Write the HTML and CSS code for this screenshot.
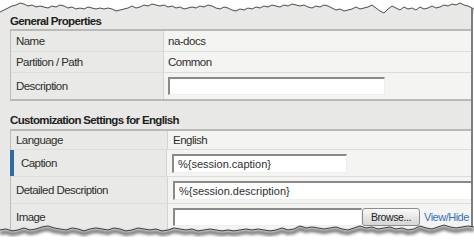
FILE: index.html
```html
<!DOCTYPE html>
<html>
<head>
<meta charset="utf-8">
<link rel="stylesheet" href="styles.css">
</head>
<body>
<div class="sheet">
  <svg class="tear-top" width="474" height="14" viewBox="0 0 474 14">
    <polygon fill="#e8e8e6" points="0,12 4,10 8,8 12,6 16,5 20,3 24,4 28,6 32,5 36,7 40,6 44,7 48,8 52,6 56,7 60,5 64,6 68,8 72,7 76,9 80,8 84,9 88,7 92,8 96,9 100,8 104,9 108,8 112,9 116,11 120,10 124,9 128,8 132,6 136,8 140,7 144,5 148,6 152,4 156,5 160,6 164,5 168,7 172,6 176,8 180,7 184,9 188,8 192,7 196,8 200,6 204,7 208,5 212,6 216,8 220,9 224,7 228,8 232,10 236,11 240,9 244,10 248,8 252,9 256,7 260,8 264,6 268,7 272,5 276,6 280,7 284,5 288,6 292,4 296,5 300,6 304,5 308,7 312,8 316,6 320,7 324,5 328,6 332,8 336,10 340,9 344,11 348,10 352,9 356,7 360,9 364,8 368,7 372,5 376,8 380,11 384,13 388,9 392,6 396,8 400,10 404,7 408,9 412,8 416,10 420,7 424,9 428,8 432,6 436,8 440,7 444,5 448,6 452,4 456,5 460,3 464,5 468,6 472,8 474,9 474,14 0,14"/>
    <polyline fill="none" stroke="#4a4a4a" stroke-width="1" points="0,12 4,10 8,8 12,6 16,5 20,3 24,4 28,6 32,5 36,7 40,6 44,7 48,8 52,6 56,7 60,5 64,6 68,8 72,7 76,9 80,8 84,9 88,7 92,8 96,9 100,8 104,9 108,8 112,9 116,11 120,10 124,9 128,8 132,6 136,8 140,7 144,5 148,6 152,4 156,5 160,6 164,5 168,7 172,6 176,8 180,7 184,9 188,8 192,7 196,8 200,6 204,7 208,5 212,6 216,8 220,9 224,7 228,8 232,10 236,11 240,9 244,10 248,8 252,9 256,7 260,8 264,6 268,7 272,5 276,6 280,7 284,5 288,6 292,4 296,5 300,6 304,5 308,7 312,8 316,6 320,7 324,5 328,6 332,8 336,10 340,9 344,11 348,10 352,9 356,7 360,9 364,8 368,7 372,5 376,8 380,11 384,13 388,9 392,6 396,8 400,10 404,7 408,9 412,8 416,10 420,7 424,9 428,8 432,6 436,8 440,7 444,5 448,6 452,4 456,5 460,3 464,5 468,6 472,8 474,9"/>
    <rect x="471" y="8" width="2" height="6" fill="#7d7d7d"/>
  </svg>
  <div class="content">
    <div class="section-title">General Properties</div>
    <div class="props props-general">
      <div class="row row-short">
        <div class="label">Name</div>
        <div class="value">na-docs</div>
      </div>
      <div class="row row-short">
        <div class="label">Partition / Path</div>
        <div class="value">Common</div>
      </div>
      <div class="row row-tall">
        <div class="label">Description</div>
        <div class="value"><div class="input input-desc"></div></div>
      </div>
    </div>

    <div class="section-title section-gap">Customization Settings for English</div>
    <div class="props props-custom">
      <div class="row row-lang">
        <div class="label">Language</div>
        <div class="value">English</div>
      </div>
      <div class="row row-tall">
        <div class="label label-marked">Caption</div>
        <div class="value"><div class="input input-caption">%{session.caption}</div></div>
      </div>
      <div class="row row-tall">
        <div class="label">Detailed Description</div>
        <div class="value"><div class="input input-detail">%{session.description}</div></div>
      </div>
      <div class="row row-tall">
        <div class="label">Image</div>
        <div class="value">
          <div class="input input-image"></div>
          <div class="browse">Browse...</div>
          <span class="link">View/Hide</span>
        </div>
      </div>
    </div>
  </div>
  <svg class="tear-bottom" width="474" height="22" viewBox="0 0 474 22">
    <defs>
      <filter id="blur" x="-5%" y="-50%" width="110%" height="200%">
        <feGaussianBlur stdDeviation="1.6"/>
      </filter>
    </defs>
    <polygon fill="#ffffff" points="0,8 6,7 12,9 18,8 24,6 30,8 36,7 42,5 48,4 54,6 60,7 66,8 72,6 78,7 84,9 90,7 96,6 102,7 108,8 114,6 120,7 126,9 132,8 138,6 144,7 150,8 156,7 162,9 168,8 174,6 180,7 186,8 192,7 198,9 204,8 210,7 216,8 222,9 228,8 234,9 240,8 246,7 252,8 258,7 264,8 270,9 276,8 282,6 288,8 294,7 300,4 306,6 312,5 318,6 324,7 330,6 336,5 342,7 348,8 354,6 360,4 366,6 372,5 378,7 384,6 390,5 396,7 402,6 408,8 414,7 420,4 426,6 432,7 438,5 444,3 450,5 456,6 462,5 468,4 474,5 474,22 0,22"/>
    <polyline fill="none" stroke="#7a7a7a" stroke-width="4" filter="url(#blur)" transform="translate(0,3)" points="0,8 6,7 12,9 18,8 24,6 30,8 36,7 42,5 48,4 54,6 60,7 66,8 72,6 78,7 84,9 90,7 96,6 102,7 108,8 114,6 120,7 126,9 132,8 138,6 144,7 150,8 156,7 162,9 168,8 174,6 180,7 186,8 192,7 198,9 204,8 210,7 216,8 222,9 228,8 234,9 240,8 246,7 252,8 258,7 264,8 270,9 276,8 282,6 288,8 294,7 300,4 306,6 312,5 318,6 324,7 330,6 336,5 342,7 348,8 354,6 360,4 366,6 372,5 378,7 384,6 390,5 396,7 402,6 408,8 414,7 420,4 426,6 432,7 438,5 444,3 450,5 456,6 462,5 468,4 474,5"/>
    <polyline fill="none" stroke="#3e3e3e" stroke-width="1" points="0,8 6,7 12,9 18,8 24,6 30,8 36,7 42,5 48,4 54,6 60,7 66,8 72,6 78,7 84,9 90,7 96,6 102,7 108,8 114,6 120,7 126,9 132,8 138,6 144,7 150,8 156,7 162,9 168,8 174,6 180,7 186,8 192,7 198,9 204,8 210,7 216,8 222,9 228,8 234,9 240,8 246,7 252,8 258,7 264,8 270,9 276,8 282,6 288,8 294,7 300,4 306,6 312,5 318,6 324,7 330,6 336,5 342,7 348,8 354,6 360,4 366,6 372,5 378,7 384,6 390,5 396,7 402,6 408,8 414,7 420,4 426,6 432,7 438,5 444,3 450,5 456,6 462,5 468,4 474,5"/>
  </svg>
</div>
</body>
</html>
```
FILE: styles.css
```css
html, body {
  margin: 0;
  padding: 0;
  background: #ffffff;
}
body {
  width: 474px;
  height: 244px;
  overflow: hidden;
  font-family: "Liberation Sans", Arial, sans-serif;
  color: #333333;
}
.sheet {
  position: relative;
  width: 474px;
  height: 244px;
}
.tear-top {
  display: block;
}
.content {
  box-sizing: border-box;
  width: 473px;
  height: 230px;
  overflow: hidden;
  background: #e8e8e6;
  border-right: 2px solid #7d7d7d;
  padding-left: 10px;
}
.section-title {
  height: 15px;
  line-height: 15px;
  font-size: 11.5px;
  font-weight: bold;
  letter-spacing: -0.65px;
  color: #222222;
}
.section-gap {
  margin-top: 10px;
  height: 18px;
  line-height: 18px;
}
.props {
  border-top: 2px solid #b9b9b5;
  border-bottom: 2px solid #b9b9b5;
  border-left: 1px solid #bcbcb8;
}
.row {
  display: flex;
  border-top: 1px solid #dcdcd8;
}
.row:first-child {
  border-top: none;
}
.row-short { height: 20px; }
.row-tall { height: 26px; }
.row-lang { height: 18px; }
.label {
  box-sizing: border-box;
  display: flex;
  align-items: center;
  padding-left: 5px;
  background: #e9e9e7;
  border-right: 1px solid #d4d4d0;
  font-size: 11.5px;
  letter-spacing: -0.55px;
  color: #2e2e2e;
}
.props-general .label { width: 153px; }
.props-custom .label { width: 157px; }
.label-marked {
  border-left: 4px solid #2f6aa3;
  margin-left: -1px;
  padding-left: 7px;
}
.value {
  flex: 1;
  min-width: 0;
  overflow: hidden;
  display: flex;
  align-items: center;
  background: #f4f4f2;
  font-size: 11.5px;
  letter-spacing: -0.5px;
  color: #2e2e2e;
}
.props-general .value { padding-left: 4px; }
.props-custom .value { padding-left: 5px; }
.input {
  box-sizing: border-box;
  flex: none;
  height: 19px;
  background: #ffffff;
  border-top: 2px solid #8a8a88;
  border-left: 2px solid #8a8a88;
  border-right: 1px solid #eeeeec;
  border-bottom: 1px solid #eeeeec;
  padding-left: 4px;
  font-size: 11px;
  line-height: 16px;
  letter-spacing: 0;
  color: #2e2e2e;
  white-space: nowrap;
}
.input-desc { width: 217px; height: 18px; }
.input-caption { width: 175px; }
.input-detail { width: 320px; }
.input-image { width: 189px; height: 18px; }
.browse {
  box-sizing: border-box;
  flex: none;
  width: 58px;
  height: 18px;
  border: 1px solid #8c8c8c;
  border-radius: 3px;
  background: linear-gradient(#fafafa, #e4e4e4 55%, #d6d6d6);
  font-size: 10.5px;
  line-height: 16px;
  text-align: center;
  letter-spacing: -0.4px;
  color: #222222;
}
.link {
  margin-left: 4px;
  font-size: 11px;
  letter-spacing: -0.5px;
  color: #3a6fb6;
}
.tear-bottom {
  position: absolute;
  left: 0;
  top: 222px;
  display: block;
}
```
